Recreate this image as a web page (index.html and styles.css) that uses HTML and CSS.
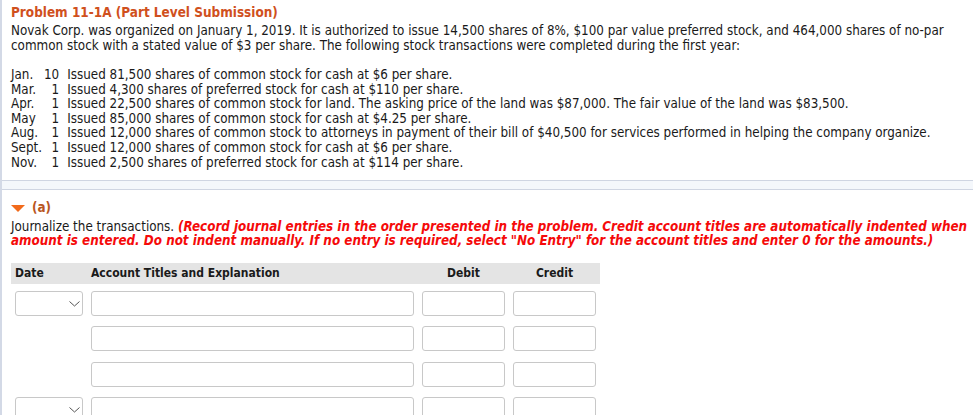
FILE: index.html
```html
<!DOCTYPE html>
<html>
<head>
<meta charset="utf-8">
<link rel="stylesheet" href="styles.css">
</head>
<body>
<div class="page">
  <section class="problem">
    <h1 class="title">Problem 11-1A (Part Level Submission)</h1>
    <p class="intro">Novak Corp. was organized on January 1, 2019. It is authorized to issue 14,500 shares of 8%, $100 par value preferred stock, and 464,000 shares of no-par common stock with a stated value of $3 per share. The following stock transactions were completed during the first year:</p>
    <table class="tx">
      <tr><td class="mon">Jan.</td><td class="day">10</td><td>Issued 81,500 shares of common stock for cash at $6 per share.</td></tr>
      <tr><td class="mon">Mar.</td><td class="day">1</td><td>Issued 4,300 shares of preferred stock for cash at $110 per share.</td></tr>
      <tr><td class="mon">Apr.</td><td class="day">1</td><td>Issued 22,500 shares of common stock for land. The asking price of the land was $87,000. The fair value of the land was $83,500.</td></tr>
      <tr><td class="mon">May</td><td class="day">1</td><td>Issued 85,000 shares of common stock for cash at $4.25 per share.</td></tr>
      <tr><td class="mon">Aug.</td><td class="day">1</td><td>Issued 12,000 shares of common stock to attorneys in payment of their bill of $40,500 for services performed in helping the company organize.</td></tr>
      <tr><td class="mon">Sept.</td><td class="day">1</td><td>Issued 12,000 shares of common stock for cash at $6 per share.</td></tr>
      <tr><td class="mon">Nov.</td><td class="day">1</td><td>Issued 2,500 shares of preferred stock for cash at $114 per share.</td></tr>
    </table>
  </section>
  <div class="divider"></div>
  <section class="part">
    <div class="part-head">
      <svg class="tri" width="14" height="7" viewBox="0 0 14 7"><polygon points="0,0 14,0 7,7" fill="#f26a1b"/></svg>
      <span class="part-label">(a)</span>
    </div>
    <p class="instr"><span>Journalize the transactions.</span> <em class="note">(Record journal entries in the order presented in the problem. Credit account titles are automatically indented when</em> <em class="note">amount is entered. Do not indent manually. If no entry is required, select "No Entry" for the account titles and enter 0 for the amounts.)</em></p>
    <div class="journal">
      <div class="jhead">
        <span class="h-date">Date</span>
        <span class="h-acct">Account Titles and Explanation</span>
        <span class="h-num">Debit</span>
        <span class="h-num">Credit</span>
      </div>
      <div class="jrows">
        <div class="sel"><svg width="11" height="6" viewBox="0 0 11 6"><polyline points="0.5,0.5 5.5,5 10.5,0.5" fill="none" stroke="#555" stroke-width="1"/></svg></div>
        <div class="box"></div><div class="box"></div><div class="box"></div>
        <div></div>
        <div class="box"></div><div class="box"></div><div class="box"></div>
        <div></div>
        <div class="box"></div><div class="box"></div><div class="box"></div>
        <div class="sel"><svg width="11" height="6" viewBox="0 0 11 6"><polyline points="0.5,0.5 5.5,5 10.5,0.5" fill="none" stroke="#555" stroke-width="1"/></svg></div>
        <div class="box"></div><div class="box"></div><div class="box"></div>
      </div>
    </div>
  </section>
</div>
</body>
</html>
```

FILE: styles.css
```css
html, body {
  margin: 0;
  padding: 0;
  background: #fff;
}
body {
  font-family: "DejaVu Sans Condensed", "DejaVu Sans", sans-serif;
  font-stretch: condensed;
  font-size: 13.3px;
  color: #1a1a1a;
  height: 415px;
  overflow: hidden;
}
.page {
  border-left: 2px solid #d3d9e6;
  min-height: 415px;
}
.problem {
  padding: 4px 0 0 9px;
  height: 176px;
  border-bottom: 1px solid #cfd5e2;
}
.title {
  margin: 0;
  font-size: 13.45px;
  font-weight: bold;
  color: #d0501d;
  line-height: 17px;
}
.intro {
  margin: 3px 0 0;
  line-height: 14.6px;
}
.tx {
  border-collapse: collapse;
  margin-top: 14.8px;
  line-height: 14.6px;
}
.tx td {
  padding: 0;
  vertical-align: top;
  white-space: nowrap;
}
.tx .mon { width: 33px; }
.tx .day { width: 13px; text-align: right; padding-right: 8px; }
.divider {
  height: 8px;
  background: #f4f7fb;
  border-bottom: 1px solid #cfd5e2;
}
.part {
  padding: 8.7px 0 0 9px;
}
.part-head {
  display: flex;
  align-items: center;
  gap: 7px;
  height: 17px;
}
.tri { display: block; margin-top: 3px; }
.part-label {
  font-weight: bold;
  color: #b9561f;
  font-size: 13.3px;
  line-height: 17px;
}
.instr {
  margin: 4px 0 0;
  line-height: 14.4px;
}
.note {
  color: #f50a0a;
  font-weight: bold;
}
.journal {
  margin-top: 14px;
  width: 589px;
}
.jhead,
.jrows {
  display: grid;
  grid-template-columns: 68px 323px 83px 83px;
  column-gap: 8px;
  padding-left: 4px;
}
.jhead {
  background: #e4e4e4;
  height: 21px;
  align-items: center;
  font-weight: bold;
  font-size: 12px;
}
.h-num { text-align: center; }
.jrows {
  row-gap: 10.3px;
  padding-top: 7.7px;
}
.box, .sel {
  height: 23px;
  border: 1px solid #c8c8c8;
  border-radius: 3px;
  background: #fff;
}
.sel {
  display: flex;
  justify-content: flex-end;
  align-items: center;
  padding-right: 2px;
}
.sel svg { display: block; margin-top: 1px; }
```
